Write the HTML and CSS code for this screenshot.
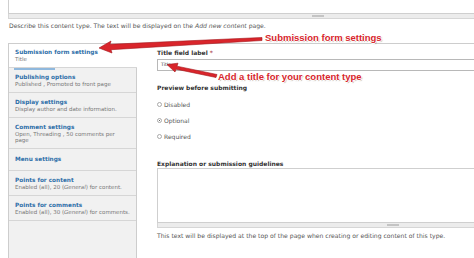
FILE: index.html
```html
<!DOCTYPE html>
<html>
  <head>
    <title>Content type - Submission form settings</title>
    <link rel="stylesheet" href="styles.css">
  </head>

  <body>
    <div class="page">
      <!-- description textarea (top cut off) -->
      <div class="textarea textarea-top"></div>
      <div class="grippie"><span></span></div>
      <p class="description">Describe this content type. The text will be displayed on the <em>Add new content</em> page.</p>

      <div class="vertical-tabs">
        <ul class="tab-list">
          <li class="tab active">
            <a href="#">Submission form settings</a>
            <span class="summary">Title</span>
          </li>
          <li class="tab">
            <span class="focus-line"></span>
            <a href="#">Publishing options</a>
            <span class="summary">Published , Promoted to front page</span>
          </li>
          <li class="tab">
            <a href="#">Display settings</a>
            <span class="summary">Display author and date information.</span>
          </li>
          <li class="tab">
            <a href="#">Comment settings</a>
            <span class="summary">Open, Threading , 50 comments per page</span>
          </li>
          <li class="tab tab-menu">
            <a href="#">Menu settings</a>
          </li>
          <li class="tab">
            <a href="#">Points for content</a>
            <span class="summary">Enabled (all), 20 (<em>General</em>) for content.</span>
          </li>
          <li class="tab">
            <a href="#">Points for comments</a>
            <span class="summary">Enabled (all), 30 (<em>General</em>) for comments.</span>
          </li>
        </ul>

        <div class="tab-pane">
          <label class="field-label">Title field label <span class="required">*</span></label>
          <div class="text-input">Title</div>

          <label class="field-label preview-label">Preview before submitting</label>
          <div class="radios">
            <div class="radio"><span class="circle"></span>Disabled</div>
            <div class="radio"><span class="circle checked"></span>Optional</div>
            <div class="radio"><span class="circle"></span>Required</div>
          </div>

          <label class="field-label help-label">Explanation or submission guidelines</label>
          <div class="textarea textarea-help"></div>
          <div class="grippie grippie-help"><span></span></div>
          <p class="help-text">This text will be displayed at the top of the page when creating or editing content of this type.</p>
        </div>
      </div>
    </div>

    <!-- annotations drawn on top of the screenshot -->
    <svg class="arrows" width="474" height="258" viewBox="0 0 474 258">
      <g fill="#d9252b" stroke="#a3161b" stroke-width="0.6" stroke-linejoin="round">
        <path d="M262 37.5 L110 44.3 L111 41 L99 48 L112 53 L111 49.7 L262 40.5 Z" />
        <path d="M217 74.5 L177 66.2 L178 63.2 L167 64.5 L175 72 L176 69.2 L216 77.5 Z" />
      </g>
    </svg>
    <span class="callout callout-1">Submission form settings</span>
    <span class="callout callout-2">Add a title for your content type</span>
  </body>
</html>
```

FILE: styles.css
```css
html,
body {
  margin: 0;
  padding: 0;
  background-color: #fff;
  overflow: hidden;
}

body {
  width: 474px;
  height: 258px;
  position: relative;
  font-family: "DejaVu Sans", Verdana, sans-serif;
  color: #444;
}

.page {
  width: 620px;
  padding-left: 8px;
}

/* textareas */
.textarea {
  border: 1px solid #cfcfcf;
  background-color: #fff;
  box-sizing: border-box;
}

.textarea-top {
  height: 14px;
  border-top: none;
}

.grippie {
  height: 4px;
  background-color: #ececec;
  border: 1px solid #d6d6d6;
  border-top: none;
  display: flex;
  justify-content: center;
  align-items: center;
}

.grippie span {
  display: block;
  width: 12px;
  height: 2px;
  border-top: 1px solid #c4c4c4;
  border-bottom: 1px solid #c4c4c4;
  box-sizing: border-box;
}

.description {
  margin: 3px 0 0 1px;
  font-size: 6.1px;
  line-height: 8px;
  color: #555;
}

/* vertical tabs */
.vertical-tabs {
  display: flex;
  margin-top: 13px;
  border-top: 1px solid #cdcdcd;
}

.tab-list {
  list-style: none;
  margin: 0;
  padding: 0;
  width: 127px;
  min-height: 220px;
  background-color: #f1f1f1;
  border-left: 1px solid #cdcdcd;
  border-right: 1px solid #cdcdcd;
}

.tab {
  position: relative;
  padding: 5px 6px 5px 6px;
  border-bottom: 1px solid #d6d6d6;
}

.tab.active {
  background-color: #fff;
  margin-right: -1px;
  padding-top: 4px;
  padding-bottom: 5px;
  border-bottom: 1px solid #d6d6d6;
}

.tab-menu {
  padding-top: 6px;
  padding-bottom: 7px;
}

.tab a {
  display: block;
  font-size: 5.75px;
  line-height: 8px;
  font-weight: bold;
  color: #2d6ea8;
  text-decoration: none;
}

.summary {
  display: block;
  font-size: 5.5px;
  line-height: 6px;
  color: #777;
}

.focus-line {
  position: absolute;
  left: 5px;
  top: 0;
  width: 41px;
  height: 2px;
  background-color: #8fb8dd;
}

/* pane */
.tab-pane {
  flex: 1;
  padding: 5px 0 0 20px;
}

.field-label {
  display: block;
  font-size: 6px;
  line-height: 8px;
  font-weight: bold;
  color: #333;
}

.required {
  color: #b5555b;
}

.text-input {
  margin-top: 2px;
  height: 12px;
  border: 1px solid #b8b8b8;
  box-sizing: border-box;
  font-size: 4.6px;
  line-height: 10px;
  padding-left: 3px;
  color: #333;
}

.preview-label {
  margin-top: 13px;
}

.radios {
  margin-top: 4px;
}

.radio {
  display: flex;
  align-items: center;
  height: 16px;
  font-size: 6px;
  color: #555;
}

.circle {
  width: 5px;
  height: 5px;
  border: 1px solid #a9a9a9;
  border-radius: 50%;
  margin-right: 2px;
  box-sizing: border-box;
  position: relative;
  background-color: #fff;
}

.circle.checked::after {
  content: "";
  position: absolute;
  left: 1px;
  top: 1px;
  width: 1.4px;
  height: 1.4px;
  border-radius: 50%;
  background-color: #333;
}

.help-label {
  margin-top: 16px;
}

.textarea-help {
  margin-top: 0;
  height: 55px;
}

.help-text {
  margin: 4px 0 0 0;
  font-size: 6.1px;
  line-height: 8px;
  color: #555;
}

/* annotations */
.arrows {
  position: absolute;
  left: 0;
  top: 0;
}

.callout {
  position: absolute;
  font-family: "Liberation Sans", Arial, sans-serif;
  font-weight: bold;
  font-size: 9.5px;
  line-height: 10px;
  color: #d8262c;
  white-space: nowrap;
  text-shadow:
    -1px 0 0 #fff,
    1px 0 0 #fff,
    0 -1px 0 #fff,
    0 1px 0 #fff,
    1px 1px 1px rgba(0, 0, 0, 0.35);
}

.callout-1 {
  left: 265px;
  top: 33px;
}

.callout-2 {
  left: 218px;
  top: 72px;
}
```
